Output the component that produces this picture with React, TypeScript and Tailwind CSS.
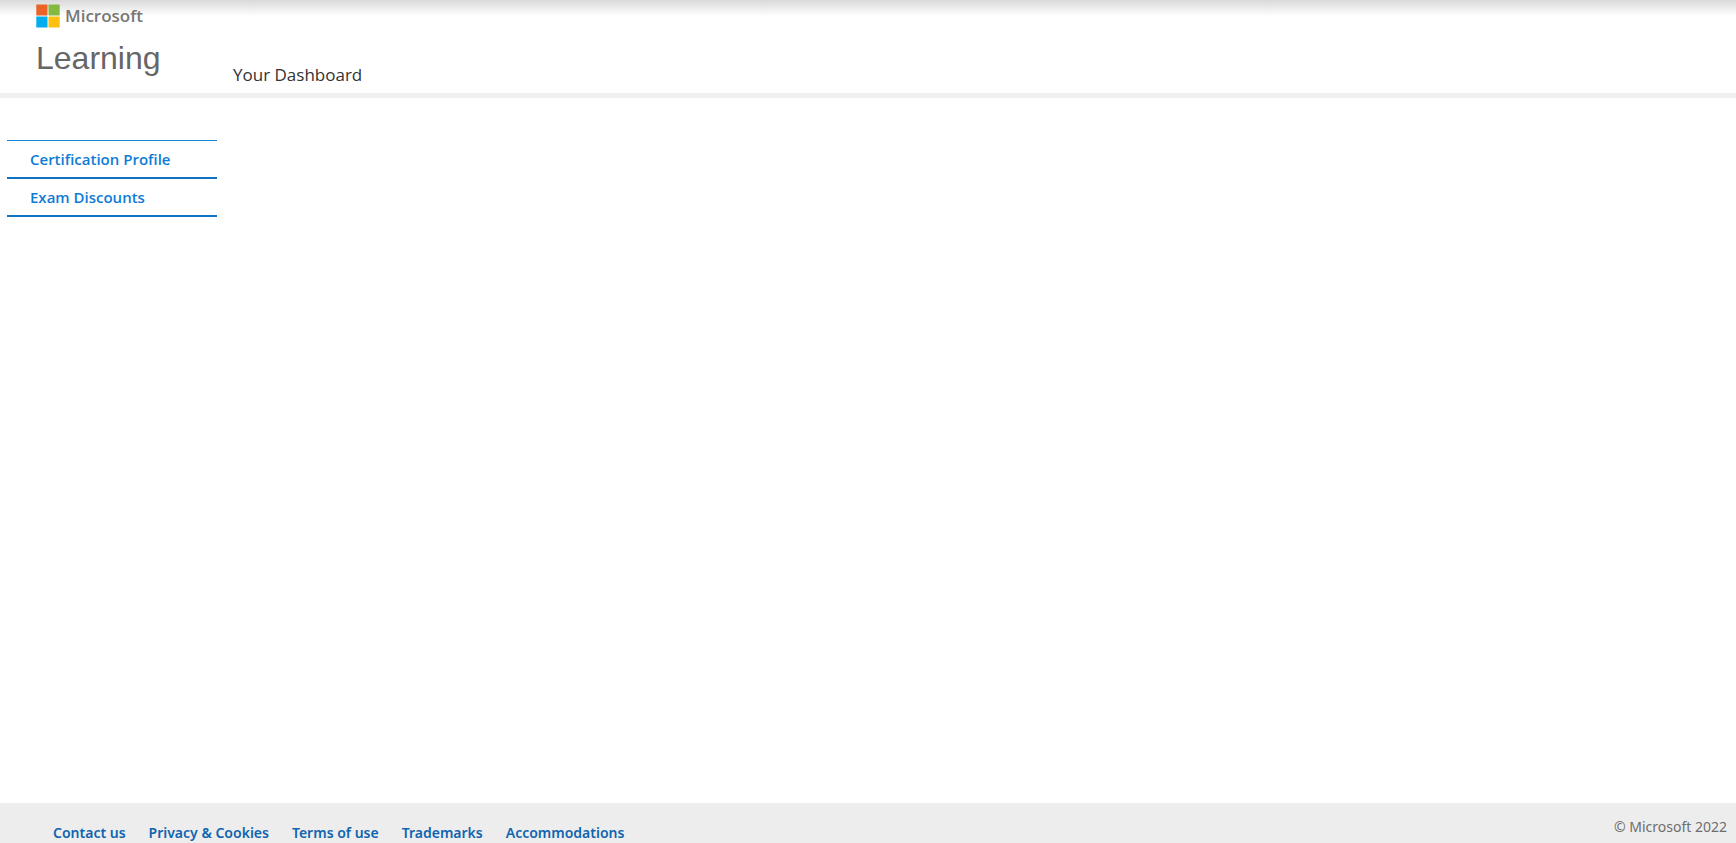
const sideLinks = ["Certification Profile", "Exam Discounts"];

const footerLinks = [
  { label: "Contact us", href: "#contact" },
  { label: "Privacy & Cookies", href: "#privacy" },
  { label: "Terms of use", href: "#terms" },
  { label: "Trademarks", href: "#trademarks" },
  { label: "Accommodations", href: "#accommodations" },
];

function MicrosoftLogo() {
  return (
    <svg className="h-6 w-6" viewBox="0 0 24 24" aria-hidden="true">
      <rect x="0.3" y="0.5" width="11.2" height="11" fill="#ec6328" />
      <rect x="12.5" y="0.5" width="11.2" height="11" fill="#84b93f" />
      <rect x="0.3" y="12.5" width="11.2" height="11" fill="#00adef" />
      <rect x="12.5" y="12.5" width="11.2" height="11" fill="#fdc010" />
    </svg>
  );
}

export default function App() {
  return (
    <div className="flex min-h-screen flex-col bg-white font-['Open_Sans','Noto_Sans',sans-serif]">
      <header className="flex items-end border-b-5 border-[#f0f0f0] bg-[linear-gradient(to_bottom,#d9d9d9_0px,#ffffff_16px)] pl-9">
        <div className="w-[197px] pt-1">
          <a href="#home" className="flex items-center gap-[5px]">
            <MicrosoftLogo />
            <span className="text-[17px] leading-6 font-semibold text-[#777777]">Microsoft</span>
          </a>
          <div className="pt-3 pb-[17px] font-['Liberation_Sans',Arial,sans-serif] text-[32px] leading-9 text-[#666666]">
            Learning
          </div>
        </div>
        <h1 className="pb-1.5 text-[17px] leading-6 text-[#333333]">Your Dashboard</h1>
      </header>

      <main className="flex-1 px-[7px] pt-[42px]">
        <nav aria-label="Dashboard" className="w-[210px] border-t border-[#1a86d8]">
          <ul>
            {sideLinks.map((label) => (
              <li key={label} className="border-b-2 border-[#0f72c4]">
                <a href="#section" className="block px-[23px] py-1.5 text-[15px] leading-6 font-semibold text-[#0f7bd6]">
                  {label}
                </a>
              </li>
            ))}
          </ul>
        </nav>
      </main>

      <footer className="flex items-start justify-between bg-[#ededed] pr-[9px] pl-[53px] font-['Noto_Sans',sans-serif]">
        <ul className="flex gap-[23px] pt-5">
          {footerLinks.map((link) => (
            <li key={link.label}>
              <a href={link.href} className="block text-[14px] leading-5 font-semibold text-[#0f65b0]">
                {link.label}
              </a>
            </li>
          ))}
        </ul>
        <p className="pt-3.5 text-[14px] leading-5 text-[#6e6e6e]">© Microsoft 2022</p>
      </footer>
    </div>
  );
}
